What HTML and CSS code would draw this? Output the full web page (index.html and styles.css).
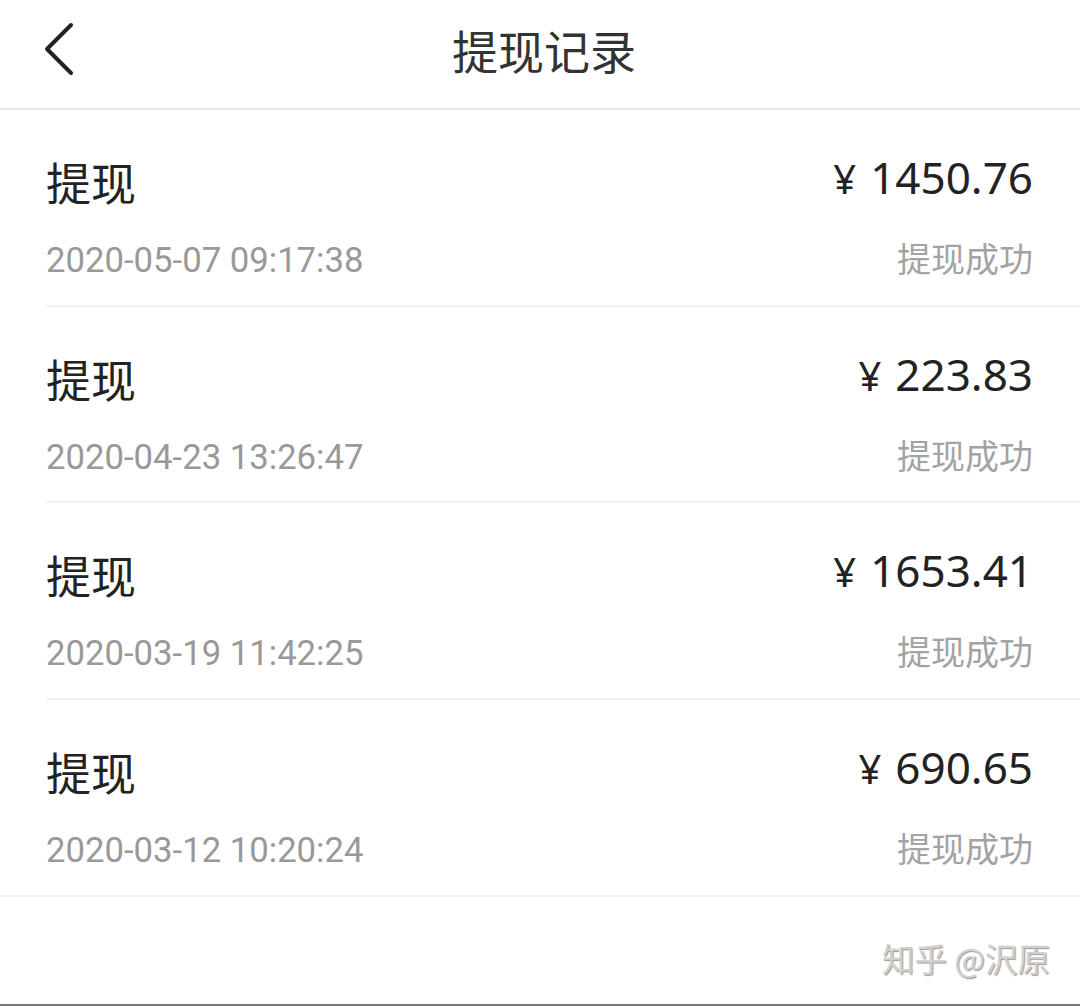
FILE: index.html
```html
<!DOCTYPE html>
<html lang="zh-CN">
<head>
    <meta charset="UTF-8">
    <meta name="viewport" content="width=device-width, initial-scale=1.0">
    <title>提现记录</title>
    <link rel="stylesheet" href="styles.css">
</head>
<body>
    <div class="page">
        <div class="header">
            <svg class="back" width="40" height="60" viewBox="0 0 40 60">
                <polyline points="27,6 3,30 27,54" fill="none" stroke="#222" stroke-width="4" stroke-linecap="round" stroke-linejoin="round"/>
            </svg>
            <h1>提现记录</h1>
        </div>

        <div class="list">
            <div class="row">
                <div class="col-left">
                    <div class="title">提现</div>
                    <div class="date">2020-05-07 09:17:38</div>
                </div>
                <div class="col-right">
                    <div class="amount"><span class="yen">¥</span>1450.76</div>
                    <div class="status">提现成功</div>
                </div>
            </div>
            <div class="row">
                <div class="col-left">
                    <div class="title">提现</div>
                    <div class="date">2020-04-23 13:26:47</div>
                </div>
                <div class="col-right">
                    <div class="amount"><span class="yen">¥</span>223.83</div>
                    <div class="status">提现成功</div>
                </div>
            </div>
            <div class="row">
                <div class="col-left">
                    <div class="title">提现</div>
                    <div class="date">2020-03-19 11:42:25</div>
                </div>
                <div class="col-right">
                    <div class="amount"><span class="yen">¥</span>1653.41</div>
                    <div class="status">提现成功</div>
                </div>
            </div>
            <div class="row last">
                <div class="col-left">
                    <div class="title">提现</div>
                    <div class="date">2020-03-12 10:20:24</div>
                </div>
                <div class="col-right">
                    <div class="amount"><span class="yen">¥</span>690.65</div>
                    <div class="status">提现成功</div>
                </div>
            </div>
        </div>

        <div class="footer">
            <span class="watermark">知乎 @沢原</span>
        </div>
    </div>
</body>
</html>
```

FILE: styles.css
```css
html, body {
    margin: 0;
    padding: 0;
    background-color: #fff;
}
body {
    font-family: "Noto Sans CJK SC", "Noto Sans", sans-serif;
}
.page {
    width: 1080px;
    height: 1006px;
    display: flex;
    flex-direction: column;
}
.header {
    position: relative;
    height: 110px;
    box-sizing: border-box;
    border-bottom: 2px solid #e8e8e8;
    display: flex;
    align-items: flex-start;
    justify-content: center;
    padding-left: 8px;
}
.header .back {
    position: absolute;
    left: 44px;
    top: 19px;
}
.header h1 {
    margin: 19px 0 0;
    font-size: 46px;
    font-weight: normal;
    color: #333;
    line-height: 60px;
}
.row {
    height: 194.7px;
    margin-left: 46px;
    padding-right: 47px;
    border-bottom: 2px solid #f0f0f0;
    display: flex;
    justify-content: space-between;
}
.row.last {
    margin-left: 0;
    padding-left: 46px;
    border-bottom-color: #f2f2f2;
}
.col-left, .col-right {
    display: flex;
    flex-direction: column;
}
.col-right {
    align-items: flex-end;
}
.title {
    margin-top: 42px;
    font-size: 45px;
    line-height: 60px;
    color: #222;
}
.date {
    margin-top: 28px;
    font-family: Roboto, "Noto Sans", sans-serif;
    font-size: 34.7px;
    line-height: 40px;
    color: #999;
}
.amount {
    margin-top: 39px;
    font-family: "Noto Sans", "Noto Sans CJK SC", sans-serif;
    font-size: 44px;
    line-height: 56px;
    color: #222;
}
.amount .yen {
    font-size: 40px;
    margin-right: 14px;
}
.status {
    margin-top: 31px;
    font-size: 34px;
    line-height: 40px;
    color: #a3a3a3;
}
.footer {
    flex: 1;
    border-bottom: 2px solid #777;
    display: flex;
    justify-content: flex-end;
    padding-right: 30px;
}
.watermark {
    margin-top: 41px;
    font-size: 32.5px;
    line-height: 40px;
    color: #d0d0d0;
    text-shadow: 1px 1px 1px #999;
}
```
